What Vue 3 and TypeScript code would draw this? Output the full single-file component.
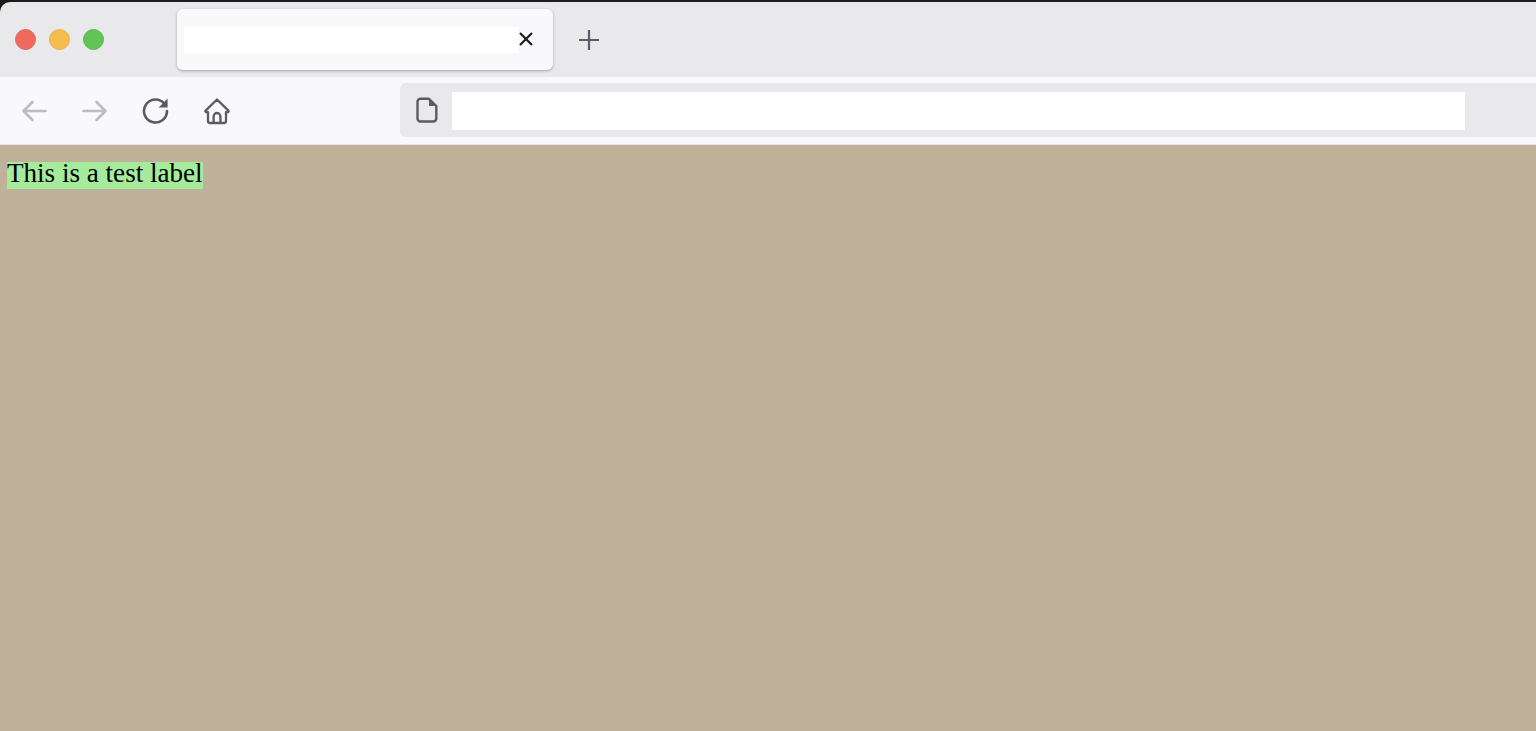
<script setup lang="ts">
const dots: string[] = ['red', 'amber', 'green']
</script>

<template>
  <div class="window">
    <div class="tabbar">
      <div class="dots">
        <span v-for="d in dots" :key="d" class="dot" :class="d"></span>
      </div>
      <div class="tab">
        <div class="tab-title"></div>
        <svg class="close" width="16" height="16" viewBox="0 0 16 16">
          <path d="M2 2 14 14M14 2 2 14" fill="none" stroke="#1c1c20" stroke-width="2.2" />
        </svg>
      </div>
      <svg class="plus" width="22" height="22" viewBox="0 0 22 22">
        <path d="M11 1V21M1 11H21" fill="none" stroke="#5b5b66" stroke-width="2.2" />
      </svg>
    </div>
    <div class="toolbar">
      <div class="nav">
        <svg class="ico" width="28" height="28" viewBox="0 0 28 28">
          <path d="M25.5 14H3.5M12.5 5 3.5 14 12.5 23" fill="none" stroke="#bdbdc1" stroke-width="2.6" stroke-linecap="round" stroke-linejoin="round" />
        </svg>
        <svg class="ico" width="28" height="28" viewBox="0 0 28 28">
          <path d="M2.5 14H24.5M15.5 5 24.5 14 15.5 23" fill="none" stroke="#bdbdc1" stroke-width="2.6" stroke-linecap="round" stroke-linejoin="round" />
        </svg>
        <svg class="ico" width="28" height="28" viewBox="0 0 28 28">
          <path d="M22.3 6.6A11.5 11.5 0 1 0 25 14" fill="none" stroke="#5b5b66" stroke-width="2.6" stroke-linecap="round" />
          <path d="M25.6 1.4V10.6H16.6Z" fill="#5b5b66" />
        </svg>
        <svg class="ico" width="28" height="28" viewBox="0 0 28 28">
          <path d="M14 2.5 2.6 13.6a.9.9 0 0 0 .6 1.5H5V24a2 2 0 0 0 2 2H21a2 2 0 0 0 2-2V15.1H24.8a.9.9 0 0 0 .6-1.5Z" fill="none" stroke="#5b5b66" stroke-width="2.3" stroke-linejoin="round" />
          <path d="M10.6 26V19.4a3.4 3.4 0 0 1 6.8 0V26" fill="none" stroke="#5b5b66" stroke-width="2.3" />
        </svg>
      </div>
      <div class="address">
        <svg class="doc" width="22" height="26" viewBox="0 0 22 26">
          <path d="M4.5 1.8H13L20.3 9V21.5a3 3 0 0 1-3 3H4.5a3 3 0 0 1-3-3V4.8a3 3 0 0 1 3-3Z" fill="none" stroke="#5b5b66" stroke-width="2.4" stroke-linejoin="round" />
          <path d="M13 1.8 20.3 9H13Z" fill="#5b5b66" />
        </svg>
        <div class="url"></div>
      </div>
    </div>
    <main class="page">
      <span class="label">This is a test label</span>
    </main>
  </div>
</template>

<style scoped>
.window {
  height: 731px;
  display: flex;
  flex-direction: column;
  background: #1d1c1a;
  padding-top: 2px;
  box-sizing: border-box;
  overflow: hidden;
}
.tabbar {
  height: 75px;
  flex: none;
  display: flex;
  align-items: flex-start;
  background: #e9e9eb;
  border-top-left-radius: 10px;
  box-sizing: border-box;
  padding-top: 7px;
}
.dots {
  display: flex;
  gap: 13px;
  padding: 20px 0 0 15px;
  width: 177px;
  flex: none;
  box-sizing: border-box;
}
.dot {
  width: 21px;
  height: 21px;
  border-radius: 50%;
  box-sizing: border-box;
}
.red { background: #ee6a5f; border: 1px solid #e5645a; }
.amber { background: #f5bd4f; border: 1px solid #e9b04a; }
.green { background: #61c454; border: 1px solid #58b94c; }
.tab {
  width: 376px;
  height: 61px;
  flex: none;
  background: #f9f9fb;
  border-radius: 6px;
  box-shadow: 0 1px 3px rgba(0, 0, 0, 0.3);
  display: flex;
  align-items: center;
  padding-left: 7px;
  box-sizing: border-box;
}
.tab-title {
  width: 334px;
  height: 26px;
  margin-top: 1px;
  flex: none;
  background: #fff;
}
.close {
  flex: none;
  margin-bottom: 1px;
}
.plus {
  margin: 20px 0 0 25px;
  flex: none;
}
.toolbar {
  height: 68px;
  flex: none;
  display: flex;
  align-items: center;
  background: #f9f9fb;
  border-bottom: 1px solid #e3e3e5;
  box-sizing: border-box;
  padding-left: 20px;
}
.nav {
  width: 380px;
  flex: none;
  display: flex;
  gap: 33px;
  align-items: center;
}
.ico {
  flex: none;
}
.address {
  flex: 1;
  height: 54px;
  margin-top: -1px;
  background: #e9e9eb;
  border-radius: 6px 0 0 6px;
  display: flex;
  align-items: center;
  padding-left: 16px;
  box-sizing: border-box;
}
.doc {
  flex: none;
}
.url {
  width: 1013px;
  height: 38px;
  margin: 2px 0 0 14px;
  background: #fff;
}
.page {
  flex: 1;
  background: #c0b19b;
  padding: 17px 0 0 7px;
}
.label {
  display: inline-block;
  height: 27px;
  line-height: 23px;
  background: #a4ec9b;
  color: #000;
  font-family: "Liberation Serif", serif;
  font-size: 27.1px;
}
</style>

<style>
html, body {
  margin: 0;
  background: #1d1c1a;
}
</style>
